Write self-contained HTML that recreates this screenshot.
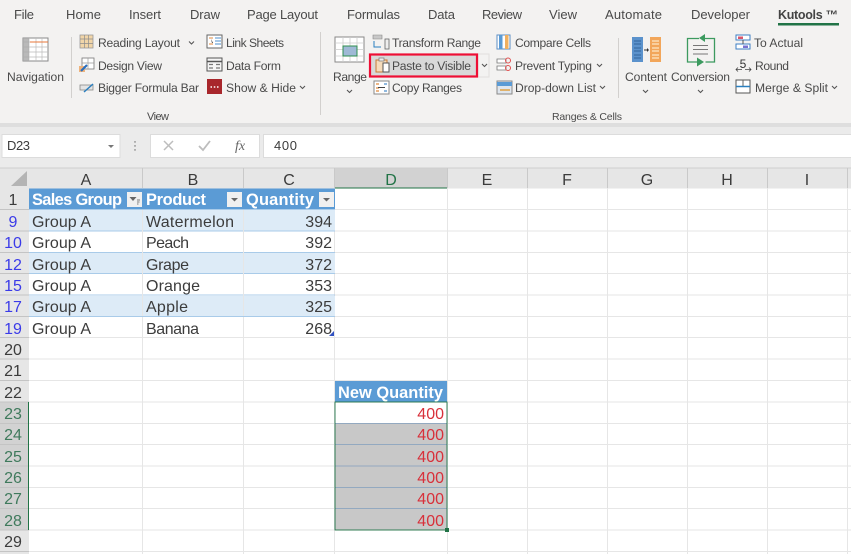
<!DOCTYPE html>
<html><head><meta charset="utf-8"><style>
html,body{margin:0;padding:0;background:#fff;width:851px;height:554px;overflow:hidden}
svg{display:block}
text{font-family:"Liberation Sans",sans-serif}
.t{font-size:13px;fill:#4a4a4a}
.r{font-size:12.1px;fill:#4a4a4a}
.c{font-size:16px;fill:#3c3c3c}
.h{font-size:16.4px;fill:#fff;font-weight:bold}
.n{font-size:16px;fill:#3c3c3c;text-anchor:middle}
.b{font-size:16px;fill:#3a3ae8;text-anchor:middle}
.g{font-size:16px;fill:#3f7a5c;text-anchor:middle}
.q{font-size:16px;fill:#d8303a;text-anchor:end}
.chev{fill:none;stroke:#555;stroke-width:1.1}
</style></head><body>
<svg width="851" height="554" viewBox="0 0 851 554" xmlns="http://www.w3.org/2000/svg">
<rect width="851" height="554" fill="#fff"/>
<rect width="851" height="124" fill="#f3f2f1"/>
<rect y="127" width="851" height="41" fill="#ebebeb"/>
<rect y="123" width="851" height="4" fill="#dedede"/>
<!-- tabs -->
<text x="14" y="19" class="t" textLength="20">File</text>
<text x="66" y="19" class="t" textLength="35">Home</text>
<text x="129" y="19" class="t" textLength="32">Insert</text>
<text x="190" y="19" class="t" textLength="30">Draw</text>
<text x="247" y="19" class="t" textLength="71">Page Layout</text>
<text x="347" y="19" class="t" textLength="53">Formulas</text>
<text x="428" y="19" class="t" textLength="27">Data</text>
<text x="482" y="19" class="t" textLength="40">Review</text>
<text x="549" y="19" class="t" textLength="28">View</text>
<text x="605" y="19" class="t" textLength="57">Automate</text>
<text x="691" y="19" class="t" textLength="59">Developer</text>
<text x="778" y="19" class="t" textLength="60" style="font-weight:bold;fill:#444;font-size:12.5px">Kutools ™</text>
<rect x="778" y="23" width="61" height="2.500" fill="#217346"/>
<!-- separators -->
<path d="M71.5 37V98M320.5 32V115M618.5 38V98" stroke="#d2d0ce" fill="none"/>
<!-- Navigation icon -->
<rect x="23" y="38" width="25" height="23" fill="#fff" stroke="#8a8a8a"/>
<path d="M23 42H48M23 47H48M23 52H48M23 57H48M29 38V61M36 38V61M42 38V61" stroke="#bbb" stroke-width=".7"/>
<rect x="23" y="38" width="6" height="23" fill="#a8a8a8" opacity=".8"/>
<path d="M30 42H48" stroke="#e8773a"/>
<text x="7" y="81" class="r" textLength="57">Navigation</text>
<!-- View group -->
<rect x="80" y="35" width="13" height="13" fill="#f1d5a8" stroke="#999" stroke-width=".8"/>
<path d="M80 39H93M80 43.5H93M84.5 35V48M88.5 35V48" stroke="#8d8d8d" stroke-width=".7"/>
<text x="98" y="47" class="r" textLength="82">Reading Layout</text>
<path class="chev" d="M189 41.500l2.500 2.500 2.500-2.500"/>
<rect x="82" y="58" width="12" height="11" fill="#fff" stroke="#777" stroke-width=".8"/>
<path d="M82 63H94M88 58V69" stroke="#999" stroke-width=".7"/>
<path d="M79 66h6v6h-6z" fill="#eeb37c"/><path d="M81 71l6-6" stroke="#2a6fbf" stroke-width="2.200"/>
<text x="98" y="70" class="r" textLength="64">Design View</text>
<rect x="80" y="85" width="13" height="5" fill="#e4e4e4" stroke="#888" stroke-width=".8"/>
<path d="M84 92l9-8" stroke="#2a7fbf" stroke-width="1.500"/>
<text x="98" y="92" class="r" textLength="101">Bigger Formula Bar</text>
<rect x="207" y="35" width="15" height="13" fill="#fff" stroke="#666"/>
<path d="M215 38h6M215 41h6M215 44h6" stroke="#4d8fcc"/><path d="M209 38h4M209 44h4" stroke="#e08a3c"/><path d="M211 39l2 4-1 0z" fill="#333"/>
<text x="226" y="47" class="r" textLength="58">Link Sheets</text>
<rect x="207" y="58" width="15" height="13" fill="#f5f5f5" stroke="#555"/>
<path d="M207 61.500h15" stroke="#555" stroke-width="1.500"/><path d="M209 64.500h4M216 64.500h4M209 68h4M216 68h4" stroke="#777" stroke-width="1.200"/>
<text x="226" y="70" class="r" textLength="55">Data Form</text>
<rect x="207" y="79" width="15" height="15" fill="#a8272c"/>
<path d="M210.500 87h1.500M213.800 87h1.500M217 87h1.500" stroke="#fff" stroke-width="1.400"/>
<text x="226" y="92" class="r" textLength="70">Show &amp; Hide</text>
<path class="chev" d="M300 86l2.500 2.500 2.500-2.500"/>
<text x="147" y="120" class="r" style="font-size:11px" textLength="22">View</text>
<!-- Range -->
<rect x="335" y="37" width="29" height="25" fill="#fff" stroke="#888"/>
<path d="M335 43h29M335 49.500h29M335 56h29M343 37v25M350 37v25M357 37v25" stroke="#ccc" stroke-width=".8"/>
<rect x="343" y="46" width="14" height="10" fill="#9fb9d6" stroke="#2f8f4f"/>
<text x="333" y="81" class="r" textLength="34">Range</text>
<path class="chev" d="M347 90l2.500 2.500 2.500-2.500"/>
<!-- Transform -->
<path d="M373 35h9v4h-9z" fill="#c8c8c8" stroke="#888" stroke-width=".6"/>
<path d="M374 41v6h7" stroke="#2a7fbf" fill="none"/><rect x="385" y="39" width="4" height="10" fill="#eee" stroke="#666" stroke-width=".8"/>
<text x="392" y="47" class="r" textLength="89">Transform Range</text>
<!-- Paste to visible -->
<rect x="478" y="54" width="11" height="23" fill="#f3f2f1" stroke="#e1dfdd"/>
<rect x="371" y="55" width="107" height="21" fill="#d9d9d9"/>
<rect x="370" y="54.500" width="107" height="22" fill="none" stroke="#ee0f35" stroke-width="2.200"/>
<rect x="376" y="60" width="11" height="12" fill="#f6dcbb" stroke="#c77a36"/>
<rect x="379" y="58" width="5" height="3" fill="#eee" stroke="#777" stroke-width=".7"/>
<rect x="383" y="63" width="6" height="9" fill="#fff" stroke="#555"/>
<text x="392" y="70" class="r" textLength="79">Paste to Visible</text>
<path class="chev" d="M482 64l2.500 2.500 2.500-2.500"/>
<!-- Copy ranges -->
<rect x="374" y="81" width="15" height="13" fill="#fff" stroke="#888"/>
<path d="M376 84h3M376 88h3M376 91h3" stroke="#e08a3c" stroke-width="1.300"/><path d="M384 84h3M384 91h3" stroke="#4d8fcc" stroke-width="1.300"/><path d="M378 87.500h7" stroke="#444"/>
<text x="392" y="92" class="r" textLength="70">Copy Ranges</text>
<!-- col 3 -->
<rect x="497" y="35" width="13" height="14" fill="#fff" stroke="#5b8fc5"/>
<rect x="499" y="35" width="3.500" height="14" fill="#5b9bd5"/><rect x="505" y="35" width="3.500" height="14" fill="#f0b060"/>
<text x="515" y="47" class="r" textLength="76">Compare Cells</text>
<path d="M497 59h9v4h-9zM497 66h9v4h-9z" fill="#fff" stroke="#777" stroke-width=".8"/>
<circle cx="508" cy="60.500" r="2.500" fill="none" stroke="#e05050"/><circle cx="508" cy="68" r="2.500" fill="none" stroke="#e05050"/>
<text x="515" y="70" class="r" textLength="77">Prevent Typing</text>
<path class="chev" d="M597 64l2.500 2.500 2.500-2.500"/>
<rect x="497" y="81" width="15" height="13" fill="#dfe6ee" stroke="#888"/>
<rect x="497" y="82" width="15" height="4" fill="#5b9bd5"/><path d="M500 90h10" stroke="#e0a040" stroke-width="1.500"/>
<text x="515" y="92" class="r" textLength="81">Drop-down List</text>
<path class="chev" d="M600 86l2.500 2.500 2.500-2.500"/>
<text x="552" y="120" class="r" style="font-size:10.500px" textLength="70">Ranges &amp; Cells</text>
<!-- Content -->
<rect x="632" y="37" width="11" height="25" fill="#5b92cc"/>
<path d="M634 41h7M634 44h7M634 48h7M634 51h7M634 55h7M634 58h7" stroke="#3a6ea5" stroke-width="1.200"/>
<rect x="650" y="37" width="11" height="25" fill="#f2a65a"/>
<path d="M652 41h7M652 44h7M652 48h7M652 51h7M652 55h7M652 58h7" stroke="#fde5c4" stroke-width="1.200"/>
<path d="M644 50h4" stroke="#333"/><path d="M647 48l2 2-2 2z" fill="#333"/>
<text x="625" y="81" class="r" textLength="42">Content</text>
<path class="chev" d="M643 90l2.500 2.500 2.500-2.500"/>
<!-- Conversion -->
<path d="M699 38.500h-11.500v23.500h11M705 38.500h9.500v23.500h-9" fill="none" stroke="#3c9a5f" stroke-width="1.300"/>
<path d="M699 38l6-4v8z" fill="#3c9a5f"/>
<path d="M697 57.500v9l7-4.500z" fill="#3c9a5f"/>
<path d="M693 45.500h15M693 49.500h15M693 54h15" stroke="#777"/>
<text x="671" y="81" class="r" textLength="59">Conversion</text>
<path class="chev" d="M698 90l2.500 2.500 2.500-2.500"/>
<!-- right col -->
<rect x="736" y="35" width="14" height="5" fill="#fff" stroke="#3d7fc4"/><rect x="738" y="36.500" width="5" height="2.500" fill="#d9556a"/>
<rect x="736" y="44" width="14" height="5" fill="#fff" stroke="#3d7fc4"/><rect x="743" y="45.500" width="5" height="2.500" fill="#7a73d0"/>
<path d="M743 40v4" stroke="#555"/>
<text x="754" y="47" class="r" textLength="49">To Actual</text>
<text x="743" y="68" style="font-size:12px;fill:#333" text-anchor="middle">5</text>
<path d="M736 69.500h6M745 69.500h6M738 67.500l-2 2 2 2M749 67.500l2 2-2 2" fill="none" stroke="#444" stroke-width=".8"/>
<text x="755" y="70" class="r" textLength="34">Round</text>
<rect x="736" y="80" width="14" height="13" fill="#fff" stroke="#555"/>
<path d="M736 86.500h14" stroke="#2a7fbf" stroke-width="1.500"/><path d="M743 80v6" stroke="#666"/>
<text x="755" y="92" class="r" textLength="73">Merge &amp; Split</text>
<path class="chev" d="M832 86l2.500 2.500 2.500-2.500"/>
<!-- formula bar -->
<rect x="2" y="134.500" width="118" height="23" fill="#fff" stroke="#dcdcdc"/>
<text x="7" y="150" style="font-size:13px;fill:#3c3c3c" textLength="23">D23</text>
<path d="M108 145h6l-3 3z" fill="#777"/>
<path d="M135 141v1.800M135 145v1.800M135 149v1.800" stroke="#999" stroke-width="1.500"/>
<rect x="150.500" y="134.500" width="109" height="23" fill="#fff" stroke="#dcdcdc"/>
<path d="M164 141l9 9M173 141l-9 9" stroke="#bdbdbd" stroke-width="1.500"/>
<path d="M199 146l4 4 7-9" fill="none" stroke="#bdbdbd" stroke-width="1.800"/>
<text x="235" y="150" style="font-family:'Liberation Serif',serif;font-style:italic;font-size:14px;fill:#666">fx</text>
<rect x="263.500" y="134.500" width="590" height="23" fill="#fff" stroke="#dcdcdc"/>
<text x="274" y="150" style="font-size:13px;fill:#3c3c3c" textLength="23">400</text>
<!-- col headers -->
<rect y="168" width="851" height="20.500" fill="#e6e6e6"/>
<rect x="0" y="188" width="29" height="366" fill="#e6e6e6"/>
<rect x="335" y="168" width="112" height="20" fill="#d2d2d2"/>
<rect x="0" y="402" width="29" height="128" fill="#d2d2d2"/>
<path d="M27 171v15H11z" fill="#b4b4b4"/>
<path d="M0 168h851" stroke="#cfcfcf"/>
<path d="M142.500 168v20M243.500 168v20M334.500 168v20M447.500 168v20M527.500 168v20M607.500 168v20M687.500 168v20M767.500 168v20M847.500 168v20" stroke="#c9c9c9"/>
<!-- gridlines -->
<g stroke="#e6e6e6">
<path d="M142.500 188V554M243.500 188V554M334.500 188V554M447.500 188V554M527.500 188V554M607.500 188V554M687.500 188V554M767.500 188V554M847.500 188V554"/>
<path d="M29 209.500H851M29 231H851M29 252.500H851M29 273.500H851M29 295H851M29 316.500H851M29 337.500H851M29 359H851M29 380.500H851M29 402H851M29 423.500H851M29 444.500H851M29 466H851M29 487.500H851M29 508.500H851M29 530H851M29 551.500H851"/>
</g>
<g stroke="#c4c4c4">
<path d="M0 209.500H29M0 231H29M0 252.500H29M0 273.500H29M0 295H29M0 316.500H29M0 337.500H29M0 359H29M0 380.500H29M0 402H29M0 423.500H29M0 444.500H29M0 466H29M0 487.500H29M0 508.500H29M0 530H29M0 551.500H29"/>
</g>
<!-- column letters -->
<text x="86" y="185" class="n">A</text><text x="193" y="185" class="n">B</text><text x="289" y="185" class="n">C</text>
<text x="391" y="185" style="font-size:16px;fill:#217346;text-anchor:middle">D</text>
<text x="487" y="185" class="n">E</text><text x="567" y="185" class="n">F</text><text x="647" y="185" class="n">G</text><text x="727" y="185" class="n">H</text><text x="807" y="185" class="n">I</text>
<!-- table -->
<rect x="29" y="188.500" width="306" height="21" fill="#5b9bd5"/>
<rect x="29" y="210" width="306" height="21" fill="#ddebf7"/>
<rect x="29" y="253" width="306" height="21" fill="#ddebf7"/>
<rect x="29" y="296" width="306" height="21" fill="#ddebf7"/>
<path d="M29 209.500H335M29 231H335M29 252.500H335M29 273.500H335M29 295H335M29 316.500H335" stroke="#a9cbe9"/>
<path d="M142.500 210V316M243.500 210V316" stroke="#e6e6e6"/>
<text x="32" y="205" class="h" textLength="90">Sales Group</text>
<text x="146" y="205" class="h" textLength="60">Product</text>
<text x="246" y="205" class="h" textLength="68">Quantity</text>
<g fill="#f0f0f0"><rect x="127" y="192" width="15" height="15"/><rect x="227" y="192" width="15" height="15"/><rect x="319" y="192" width="15" height="15"/></g>
<g fill="#666"><path d="M129.500 197h7l-3.500 4z"/><path d="M231 198h7l-3.500 3.500z"/><path d="M323 198h7l-3.500 3.500z"/></g>
<path d="M137 200h3M137 202h2.500M137 204h1.500" stroke="#555" stroke-width=".8"/>
<!-- data -->
<text x="32" y="227" class="c" textLength="59">Group A</text><text x="146" y="227" class="c" textLength="88">Watermelon</text><text x="332" y="227" class="c" text-anchor="end">394</text>
<text x="32" y="248" class="c" textLength="59">Group A</text><text x="146" y="248" class="c" textLength="43">Peach</text><text x="332" y="248" class="c" text-anchor="end">392</text>
<text x="32" y="270" class="c" textLength="59">Group A</text><text x="146" y="270" class="c" textLength="43">Grape</text><text x="332" y="270" class="c" text-anchor="end">372</text>
<text x="32" y="291" class="c" textLength="59">Group A</text><text x="146" y="291" class="c" textLength="54">Orange</text><text x="332" y="291" class="c" text-anchor="end">353</text>
<text x="32" y="312" class="c" textLength="59">Group A</text><text x="146" y="312" class="c" textLength="42">Apple</text><text x="332" y="312" class="c" text-anchor="end">325</text>
<text x="32" y="334" class="c" textLength="59">Group A</text><text x="146" y="334" class="c" textLength="53">Banana</text><text x="332" y="334" class="c" text-anchor="end">268</text>
<path d="M334 331v5h-5z" fill="#3050c0"/>
<!-- row numbers -->
<text x="13" y="205" class="n">1</text>
<text x="13" y="227" class="b">9</text><text x="13" y="248" class="b">10</text><text x="13" y="270" class="b">12</text><text x="13" y="291" class="b">15</text><text x="13" y="312" class="b">17</text><text x="13" y="334" class="b">19</text>
<text x="13" y="355" class="n">20</text><text x="13" y="376" class="n">21</text><text x="13" y="398" class="n">22</text>
<text x="13" y="419" class="g">23</text><text x="13" y="440" class="g">24</text><text x="13" y="462" class="g">25</text><text x="13" y="483" class="g">26</text><text x="13" y="504" class="g">27</text><text x="13" y="526" class="g">28</text>
<text x="13" y="547" class="n">29</text>
<!-- new quantity -->
<rect x="335" y="381" width="112" height="21" fill="#5b9bd5"/>
<text x="338" y="398" class="h" textLength="105">New Quantity</text>
<rect x="335" y="423" width="112" height="107" fill="#c8c8c8"/>
<path d="M335 423.500H447M335 444.500H447M335 466H447M335 487.500H447M335 508.500H447" stroke="#93a9c0"/>
<text x="444" y="419" class="q">400</text><text x="444" y="440" class="q">400</text><text x="444" y="462" class="q">400</text><text x="444" y="483" class="q">400</text><text x="444" y="504" class="q">400</text><text x="444" y="526" class="q">400</text>
<rect x="335" y="402" width="112" height="128" fill="none" stroke="#217346" stroke-width=".9"/>
<rect x="445" y="528" width="4" height="4" fill="#217346"/>
<path d="M335 188h112" stroke="#217346" stroke-width="1"/>
<path d="M28.500 402v128" stroke="#217346" stroke-width="1"/>
</svg>
</body></html>
